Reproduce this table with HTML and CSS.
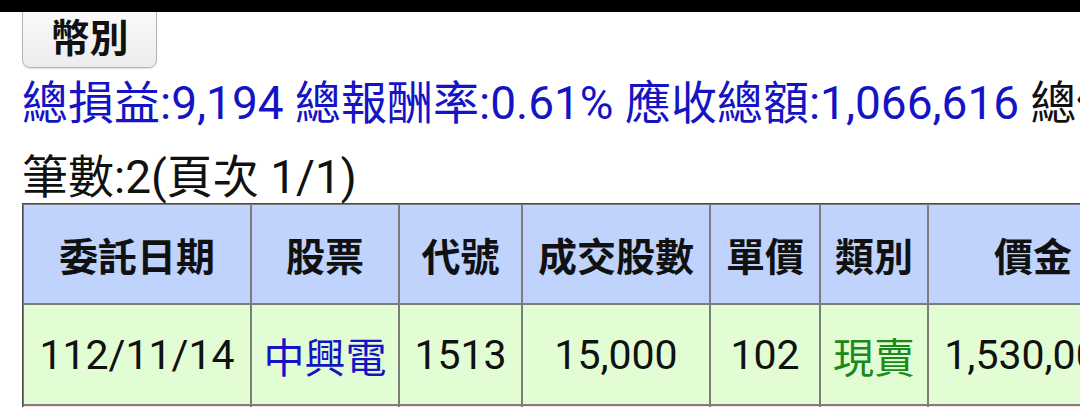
FILE: index.html
```html
<!DOCTYPE html>
<html lang="zh-Hant">
<head>
<meta charset="utf-8">
<link rel="stylesheet" href="styles.css">
</head>
<body>
<div class="topbar"></div>
<main class="page">
  <div class="toolbar"><button class="btn">幣別</button></div>
  <div class="summary"><span class="blue">總損益:9,194 總報酬率:0.61% 應收總額:1,066,616</span> <span class="black">總價金:1,530,000</span></div>
  <div class="count">筆數:2(頁次 1/1)</div>
  <table class="grid">
    <thead>
      <tr class="head">
        <th class="c1">委託日期</th>
        <th class="c2">股票</th>
        <th class="c3">代號</th>
        <th class="c4">成交股數</th>
        <th class="c5">單價</th>
        <th class="c6">類別</th>
        <th class="c7">價金</th>
      </tr>
    </thead>
    <tbody>
      <tr class="buy">
        <td>112/11/14</td>
        <td class="stock">中興電</td>
        <td>1513</td>
        <td>15,000</td>
        <td>102</td>
        <td class="sell">現賣</td>
        <td>1,530,000</td>
      </tr>
      <tr class="pink">
        <td>112/11/14</td>
        <td class="stock">中興電</td>
        <td>1513</td>
        <td>5,000</td>
        <td>102</td>
        <td class="sell">現買</td>
        <td>510,000</td>
      </tr>
    </tbody>
  </table>
</main>
</body>
</html>
```

FILE: styles.css
```css
html, body {
  margin: 0;
  padding: 0;
  background: #ffffff;
  overflow: hidden;
  width: 1080px;
  height: 407px;
}
body {
  font-family: Roboto, "Noto Sans CJK TC", "Noto Sans", sans-serif;
  color: #111;
}
.topbar {
  position: fixed;
  top: 0;
  left: 0;
  width: 1080px;
  height: 12px;
  background: #000;
  z-index: 5;
}
.page {
  padding-left: 22px;
  padding-top: 2px;
}
.toolbar {
  display: flex;
  height: 66px;
  align-items: flex-start;
}
.btn {
  box-sizing: border-box;
  width: 135px;
  height: 66px;
  padding: 8px 0 0 0;
  border: 1.5px solid #b4b4b4;
  border-radius: 8px;
  background: linear-gradient(#fbfbfb, #ececec);
  box-shadow: 0 1px 1px rgba(0,0,0,0.12);
  font-family: Roboto, "Noto Sans CJK TC", sans-serif;
  font-weight: 700;
  font-size: 39px;
  line-height: 46px;
  color: #111;
}
.summary {
  margin-top: 9px;
  font-size: 46px;
  line-height: 52px;
  white-space: nowrap;
}
.blue { color: #1414c4; }
.black { color: #111; }
.count {
  margin-top: 22px;
  font-size: 46px;
  line-height: 52px;
  white-space: nowrap;
}
.grid {
  table-layout: fixed;
  border-collapse: separate;
  border-spacing: 0;
  border: 1px solid #4a4a4a;
  width: 1116px;
}
.grid th, .grid td {
  box-sizing: border-box;
  border: 1px solid #7c7c7c;
  text-align: center;
  vertical-align: middle;
  padding: 0;
  white-space: nowrap;
  overflow: hidden;
}
.head th {
  background: #bfd3fd;
  height: 100px;
  font-size: 39px;
  font-weight: 700;
  color: #111;
}
.c1 { width: 228px; }
.c2 { width: 148px; }
.c3 { width: 123px; }
.c4 { width: 188px; }
.c5 { width: 110px; }
.c6 { width: 108px; }
.c7 { width: 210px; }
.buy td {
  background: #e2fcd3;
  height: 101px;
  font-size: 41px;
  color: #111;
}
.pink td {
  background: #fde0e0;
  height: 101px;
  font-size: 41px;
}
.stock { color: #1414c4 !important; }
.sell { color: #1a8a1a !important; }
```
